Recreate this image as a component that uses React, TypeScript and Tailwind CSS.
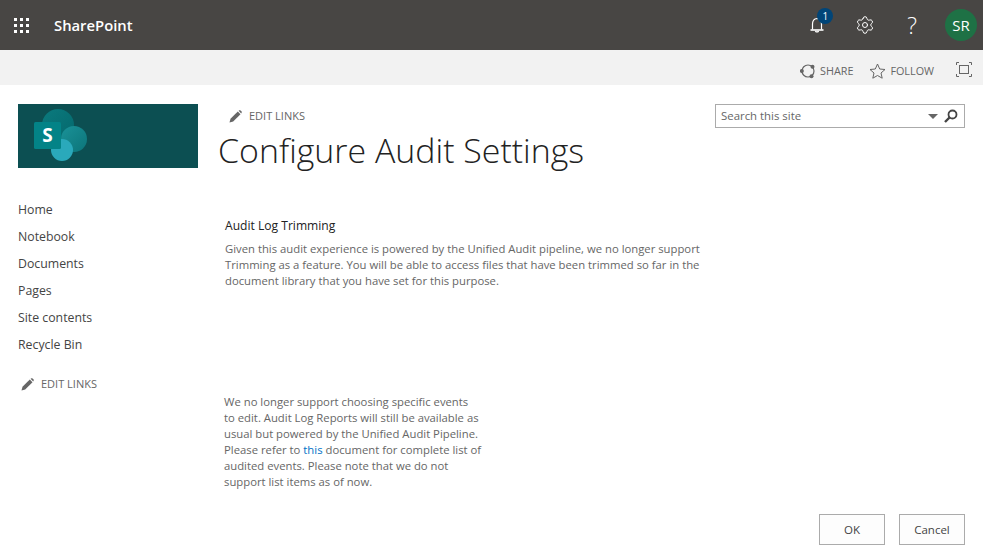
import React from 'react';
import { Settings } from 'lucide-react';

const font = "font-['Open_Sans','Noto_Sans',sans-serif]";

function Waffle() {
  const dots = [0, 1, 2, 3, 4, 5, 6, 7, 8];
  return (
    <div className="grid grid-cols-3 gap-[3px] w-[15px]">
      {dots.map((d) => (
        <span key={d} className="block w-[3px] h-[3px] bg-white" />
      ))}
    </div>
  );
}

function BellIcon() {
  return (
    <svg width="16" height="16" viewBox="0 0 16 16" fill="none" stroke="#fff" strokeWidth="1.2">
      <path d="M3.5 12.5 V7 Q3.5 2 8 1.5 Q12.5 2 12.5 7 V12.5" />
      <path d="M1.5 13 H14.5" strokeWidth="1.6" />
      <path d="M6.3 14 Q8 16 9.7 14" />
    </svg>
  );
}

function SearchIcon() {
  return (
    <svg width="14" height="14" viewBox="0 0 14 14" fill="none" stroke="#444">
      <circle cx="8.5" cy="5.5" r="4" strokeWidth="1.8" />
      <path d="M5.5 8.5 L1 13" strokeWidth="2.4" />
    </svg>
  );
}

function Pencil() {
  return (
    <svg width="13" height="13" viewBox="0 0 13 13">
      <path d="M0.5 12.5 L1.5 8.8 L8.8 1.5 L11.5 4.2 L4.2 11.5 Z" fill="#666" />
      <path d="M9.6 0.8 L10.4 0.2 Q11 0 11.6 0.4 L12.6 1.4 Q13 2 12.7 2.6 L12.2 3.4 Z" fill="#666" />
    </svg>
  );
}

function ShareIcon() {
  return (
    <svg width="16" height="16" viewBox="0 0 16 16" fill="none">
      <circle cx="8" cy="8" r="6" stroke="#666" strokeWidth="1.2" />
      <circle cx="12.5" cy="3.8" r="2" fill="#666" />
      <circle cx="1.9" cy="8" r="2" fill="#666" />
      <circle cx="11.5" cy="13.2" r="2" fill="#666" />
    </svg>
  );
}

function StarIcon() {
  return (
    <svg width="17" height="16" viewBox="0 0 17 16" fill="none">
      <path d="M8.5 1 L10.7 6 L16 6.5 L12 10 L13.2 15.2 L8.5 12.5 L3.8 15.2 L5 10 L1 6.5 L6.3 6 Z" stroke="#666" strokeWidth="1" strokeLinejoin="round" />
    </svg>
  );
}

function FocusIcon() {
  return (
    <svg width="16" height="15" viewBox="0 0 16 15" fill="none" stroke="#666">
      <rect x="3.5" y="3.5" width="9" height="8" />
      <path d="M0.5 3 V0.5 H3 M13 0.5 H15.5 V3 M15.5 12 V14.5 H13 M3 14.5 H0.5 V12" />
    </svg>
  );
}

function SpLogo() {
  return (
    <svg width="54" height="54" viewBox="0 0 54 54">
      <defs>
        <linearGradient id="spA" x1="0" y1="0" x2="1" y2="1">
          <stop offset="0" stopColor="#0b7a7e" />
          <stop offset="1" stopColor="#04686c" />
        </linearGradient>
        <linearGradient id="spB" x1="0" y1="0" x2="1" y2="1">
          <stop offset="0" stopColor="#1a9298" />
          <stop offset="1" stopColor="#0c7479" />
        </linearGradient>
      </defs>
      <circle cx="24" cy="17" r="16" fill="url(#spA)" />
      <circle cx="40" cy="31" r="13" fill="url(#spB)" />
      <circle cx="28" cy="42" r="11" fill="#2aa9bb" />
      <rect x="0" y="14" width="27" height="27" rx="1.5" fill="#038387" />
      <text x="13.5" y="34" textAnchor="middle" fontFamily="Open Sans" fontWeight="700" fontSize="19" fill="#fff">S</text>
    </svg>
  );
}

const navItems = ['Home', 'Notebook', 'Documents', 'Pages', 'Site contents', 'Recycle Bin'];

export default function App() {
  return (
    <div className={`${font} w-[983px] h-[560px] bg-white overflow-hidden flex flex-col`}>
      {/* Suite bar */}
      <div className="h-[50px] shrink-0 bg-[#484644] flex items-center text-white">
        <div className="pl-[14px] w-[54px]">
          <Waffle />
        </div>
        <span className="text-[14.8px] font-semibold">SharePoint</span>
        <div className="ml-auto flex items-center">
          <div className="relative mr-[30px]">
            <BellIcon />
            <span className="absolute -top-[9px] left-[8px] w-[16px] h-[16px] rounded-full bg-[#004578] text-[10px] flex items-center justify-center">1</span>
          </div>
          <Settings size={20} strokeWidth={1.2} className="mr-[32px]" />
          <span className="text-[23px] font-light leading-none mr-[28px]">?</span>
          <div className="w-[32px] h-[32px] rounded-full bg-[#1e7145] text-[15px] flex items-center justify-center mr-[6px]">SR</div>
        </div>
      </div>

      {/* Action bar */}
      <div className="h-[35px] shrink-0 bg-[#f2f2f2] flex items-center justify-end pr-[11px] pt-[7px] text-[10.8px] text-[#666]">
        <ShareIcon />
        <span className="ml-[4px] mr-[16px]">SHARE</span>
        <StarIcon />
        <span className="ml-[4px] mr-[22px]">FOLLOW</span>
        <span className="-mt-[3px]">
          <FocusIcon />
        </span>
      </div>

      {/* Page body */}
      <div className="flex flex-1 pt-[19px] pl-[18px]">
        <div className="w-[200px] shrink-0">
          <div className="w-[180px] h-[64px] bg-[#0c4f52] pl-[16px] pt-[4px]">
            <SpLogo />
          </div>
          <div className="mt-[29px] flex flex-col text-[12.3px] text-[#444]">
            {navItems.map((n) => (
              <div key={n} className="h-[27px] flex items-center">{n}</div>
            ))}
          </div>
          <div className="mt-[17px] flex items-center text-[11px] text-[#666]">
            <span className="ml-[3px] mr-[7px]"><Pencil /></span>
            EDIT LINKS
          </div>
        </div>

        <div className="flex-1 flex flex-col pr-[18px]">
          <div className="flex justify-between">
            <div>
              <div className="flex items-center text-[11px] text-[#666] h-[24px] ml-[11px]">
                <span className="mr-[7px]"><Pencil /></span>
                EDIT LINKS
              </div>
              <h1 className="text-[33.9px] leading-[44px] font-light text-[#222]">Configure Audit Settings</h1>
            </div>
            <div className="w-[250px] h-[24px] border border-[#ababab] flex items-center pl-[5px] pr-[6px] text-[11.4px] text-[#666]">
              <span>Search this site</span>
              <span className="ml-auto mr-[6px] w-0 h-0 border-x-[5px] border-x-transparent border-t-[5px] border-t-[#666]" />
              <SearchIcon />
            </div>
          </div>

          <div className="ml-[7px] mt-[44px] w-[482px]">
            <div className="text-[12.1px] leading-[20px] text-[#222]">Audit Log Trimming</div>
            <p className="mt-[5px] text-[11.3px] leading-[16px] text-[#666]">
              Given this audit experience is powered by the Unified Audit pipeline, we no longer support Trimming as a feature. You will be able to access files that have been trimmed so far in the document library that you have set for this purpose.
            </p>
          </div>

          <p className="ml-[6px] mt-[105px] w-[262px] text-[11.3px] leading-[16px] text-[#666]">
            We no longer support choosing specific events<br />
            to edit. Audit Log Reports will still be available as usual but powered by the Unified Audit Pipeline. Please refer to <span className="text-[#0072c6]">this</span> document for complete list of audited events. Please note that we do not support list items as of now.
          </p>

          <div className="mt-[24px] flex justify-end gap-[14px]">
            <button className="w-[66px] h-[31px] border border-[#ababab] text-[11.5px] text-[#444] bg-[#fdfdfd]">OK</button>
            <button className="w-[66px] h-[31px] border border-[#ababab] text-[11.5px] text-[#444] bg-[#fdfdfd]">Cancel</button>
          </div>
        </div>
      </div>
    </div>
  );
}
